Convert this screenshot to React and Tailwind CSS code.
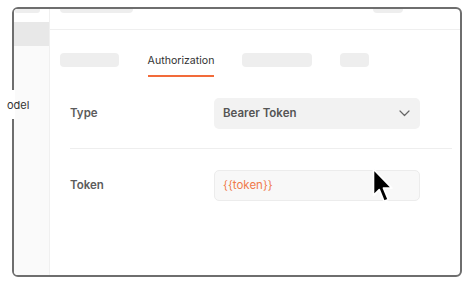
export default function App() {
  return (
    <div className="w-[474px] h-[284px] bg-white relative overflow-hidden" style={{ fontFamily: "Inter, 'Noto Sans', sans-serif" }}>
      <div className="ml-[12px] mt-[7px] w-[450px] h-[270px] border-2 border-[#6e6e6e] rounded-[6px] overflow-hidden flex bg-white">
        {/* sidebar */}
        <div className="w-[36px] shrink-0 bg-[#f8f8f8] border-r border-[#f0f0f0] flex flex-col">
          <div className="h-[13px] bg-white flex">
            <div className="w-[26px] h-[4px] bg-[#eeeeee] rounded-b-[3px]" />
          </div>
          <div className="h-[24px] bg-[#e8e8e8]" />
          <div className="flex-1 bg-[#fafafa]" />
        </div>
        {/* main */}
        <div className="flex-1 flex flex-col">
          <div className="h-[21px] border-b border-[#efefef] flex items-start">
            <div className="ml-[10px] w-[73px] h-[4px] bg-[#eeeeee] rounded-b-[4px]" />
            <div className="ml-[240px] w-[30px] h-[4px] bg-[#eeeeee] rounded-b-[4px]" />
          </div>
          <div className="pt-[23px] pl-[10px] flex items-start">
            <div className="w-[59px] h-[14px] rounded-[4px] bg-[#eeeeee]" />
            <div className="ml-[29px] w-[66px] flex flex-col items-center">
              <div className="h-[15px] leading-[15px] text-[10.6px] text-[#333] whitespace-nowrap">Authorization</div>
              <div className="mt-[7px] h-[2px] w-[66px] bg-[#f26b3a]" />
            </div>
            <div className="ml-[28px] w-[70px] h-[14px] rounded-[4px] bg-[#eeeeee]" />
            <div className="ml-[28px] w-[29px] h-[14px] rounded-[4px] bg-[#eeeeee]" />
          </div>
          <div className="mt-[21px] pl-[20px] flex items-center">
            <div className="w-[144px] text-[11.5px] font-semibold text-[#5c5c5c]">Type</div>
            <div className="w-[206px] h-[31px] rounded-[5px] bg-[#f2f2f2] flex items-center justify-between pl-[9px] pr-[10px]">
              <span className="text-[11.5px] font-semibold text-[#555]">Bearer Token</span>
              <svg width="11" height="7" viewBox="0 0 11 7" fill="none">
                <path d="M1 1 L5.5 5.5 L10 1" stroke="#666" strokeWidth="1.2" strokeLinecap="round" strokeLinejoin="round" />
              </svg>
            </div>
          </div>
          <div className="mt-[19px] ml-[20px] mr-[8px] h-px bg-[#eeeeee]" />
          <div className="mt-[21px] pl-[20px] flex items-center">
            <div className="w-[144px] text-[11.5px] font-semibold text-[#5c5c5c]">Token</div>
            <div className="w-[206px] h-[31px] rounded-[5px] bg-[#f8f8f8] border border-[#ececec] flex items-center pl-[8px]">
              <span className="text-[11.5px] text-[#f07a4a]">{"{{token}}"}</span>
            </div>
          </div>
        </div>
      </div>
      {/* sidebar label overlapping frame */}
      <div className="absolute left-[10px] top-[90px] w-[5px] h-[29px] bg-white" />
      <span className="absolute left-[7px] top-[98px] text-[11px] text-[#333] leading-[14px]">odel</span>
      {/* cursor */}
      <svg className="absolute left-[371px] top-[167px]" width="26" height="40" viewBox="0 0 24 38">
        <path d="M2 2 L2 27 L7.5 21.5 L12 32.5 L16 30.8 L11.5 20 L19.5 20 Z" fill="#000" stroke="#fff" strokeWidth="1.6" strokeLinejoin="round" />
      </svg>
    </div>
  );
}
